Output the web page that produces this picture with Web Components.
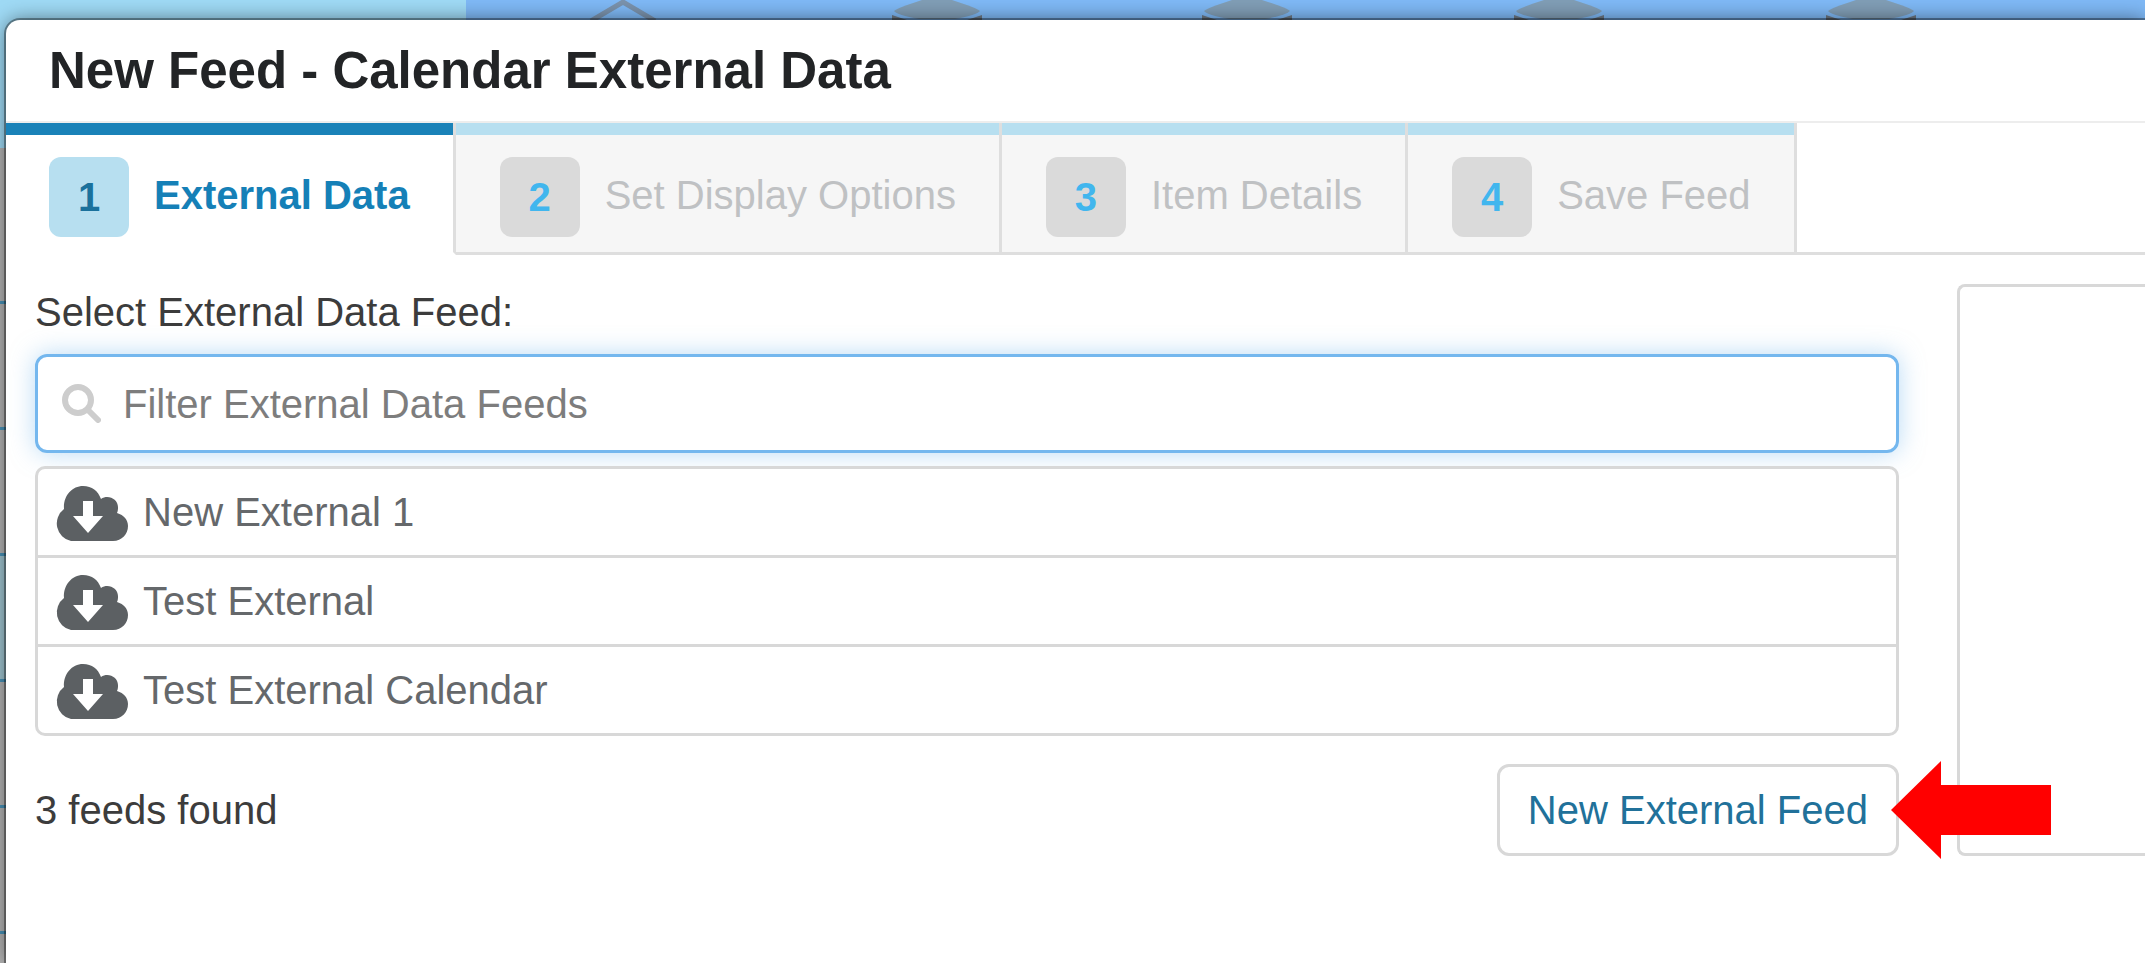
<!DOCTYPE html>
<html lang="en">
<head>
<meta charset="utf-8">
<title>New Feed - Calendar External Data</title>
<style>
html, body {
	height: 100%;
	margin: 0;
}

body {
	font-family: "Liberation Sans", Arial, sans-serif;
	font-size: 40px;
	line-height: 48px;
	color: #3c3c3c;
	overflow: hidden;
}
</style>
</head>
<body>

<feed-page>
	<page-backdrop slot="backdrop"></page-backdrop>
	<feed-dialog>
		<span slot="title">New Feed - Calendar External Data</span>
		<wizard-step slot="steps" number="1" selected>External Data</wizard-step>
		<wizard-step slot="steps" number="2">Set Display Options</wizard-step>
		<wizard-step slot="steps" number="3">Item Details</wizard-step>
		<wizard-step slot="steps" number="4">Save Feed</wizard-step>
		<feed-picker>
			<feed-item>New External 1</feed-item>
			<feed-item>Test External</feed-item>
			<feed-item>Test External Calendar</feed-item>
			<span slot="count">3 feeds found</span>
			<feed-button slot="action">New External Feed</feed-button>
		</feed-picker>
		<preview-panel slot="preview"></preview-panel>
	</feed-dialog>
</feed-page>

<script>
(function() {

function define(name, html) {
	const template = document.createElement('template');
	template.innerHTML = html;

	window.customElements.define(name, class extends HTMLElement {
		constructor() {
			super();
			this.attachShadow({mode: 'open'});
			this.shadowRoot.appendChild(template.content.cloneNode(true));
		}

		connectedCallback() {
			// the step number is passed as an attribute
			var badge = this.shadowRoot.querySelector('.number');
			if(badge) {
				badge.textContent = this.getAttribute('number');
			}
		}
	});
}

// backdrop and dialog share one grid cell, the dialog lies on top
define('feed-page', `
    <style>
:host {
	display: grid;
	grid-template: minmax(0, 1fr) / minmax(0, 1fr);
	height: 100%;
}

::slotted(*) {
	grid-area: 1 / 1;
}
</style>

<slot name="backdrop"></slot>
<slot></slot>`);

define('page-backdrop', `
    <style>
:host {
	display: flex;
	flex-direction: column;
	overflow: hidden;
	background: #b4b4b4;
}

.banner {
	display: flex;
	flex: none;
	height: 148px;
	background: #9fdaf5;
}

.brand {
	flex: none;
	width: 466px;
}

.menu {
	flex: 1;
	background: #7fb9f6;
}

svg {
	display: block;
}

.line {
	flex: none;
	height: 123px;
	border-bottom: 3px solid #4a93b8;
}

.first {
	height: 153px;
}

.tinted {
	background: #9fc4d0;
}
</style>

<div class="banner">
	<div class="brand"></div>
	<div class="menu">
		<svg width="1679" height="20" viewBox="466 0 1679 20" aria-hidden="true">
			<defs>
				<g id="hat">
					<path d="M-43 11Q-40 8-15 0H15Q40 8 43 11Q40 15 18 19H-18Q-40 15-43 11Z" fill="#819eb6"/>
					<path d="M-45 15L-30 20H-45ZM45 15L30 20H45Z" fill="#6c7884"/>
				</g>
			</defs>
			<path d="M591 21L623 2L655 21" fill="none" stroke="#7b93ad" stroke-width="5"/>
			<use href="#hat" x="937"/>
			<use href="#hat" x="1247"/>
			<use href="#hat" x="1559"/>
			<use href="#hat" x="1871"/>
		</svg>
	</div>
</div>
<div class="line first"></div>
<div class="line"></div>
<div class="line"></div>
<div class="line tinted"></div>
<div class="line"></div>
<div class="line"></div>`);

define('feed-dialog', `
    <style>
:host {
	display: flex;
	flex-direction: column;
	margin: 20px 0 0 6px;
	border-radius: 14px 0 0 0;
	background: #fff;
	box-shadow: 0 0 0 2px rgba(0, 0, 0, .35), 0 0 20px rgba(0, 0, 0, .5);
}

h1 {
	margin: 0;
	padding: 20px 43px;
	border-bottom: 2px solid #ededed;
	font-size: 51px;
	line-height: 61px;
	color: #222426;
}

nav {
	display: flex;
}

.rest {
	flex: 1;
	border-bottom: 3px solid #dedede;
}

.content {
	display: grid;
	grid-template-columns: minmax(0, 1fr) 188px;
	gap: 58px;
	padding: 29px 0 0 29px;
}
</style>

<h1><slot name="title"></slot></h1>
<nav><slot name="steps"></slot><div class="rest"></div></nav>
<div class="content">
	<slot></slot>
	<slot name="preview"></slot>
</div>`);

define('wizard-step', `
    <style>
:host {
	display: block;
}

button {
	display: flex;
	align-items: center;
	gap: 25px;
	box-sizing: border-box;
	height: 132px;
	margin: 0;
	padding: 18px 43px 0 44px;
	border: solid #dedede;
	border-width: 0 3px 3px 0;
	background: linear-gradient(#b7dff0 12px, #f6f6f6 12px);
	font: inherit;
	color: #bfc1c3;
	white-space: nowrap;
}

.number {
	width: 80px;
	border-radius: 12px;
	background: #dadada;
	font-weight: bold;
	line-height: 80px;
	color: #41b6ee;
}

.label {
	padding-bottom: 3px;
}

:host([selected]) button {
	padding-left: 43px;
	border-bottom-color: #fff;
	background: linear-gradient(#1a82b8 12px, #fff 12px);
	font-weight: bold;
	color: #1580b7;
}

:host([selected]) .number {
	background: #b7dff0;
	color: #1a719c;
}
</style>

<button type="button"><span class="number"></span><span class="label"><slot></slot></span></button>`);

define('feed-picker', `
    <style>
:host {
	display: block;
}

label {
	display: block;
	padding: 4px 0 18px;
}

.filter {
	display: flex;
	align-items: center;
	gap: 22px;
	box-sizing: border-box;
	height: 99px;
	padding: 0 24px;
	border: 3px solid #74b7ee;
	border-radius: 12px;
	box-shadow: 0 0 24px rgba(116, 183, 238, .5);
}

.filter svg {
	flex: none;
}

input {
	flex: 1;
	min-width: 0;
	padding: 0;
	border: 0;
	outline: none;
	background: none;
	font: inherit;
	color: inherit;
}

input::placeholder {
	color: #7d7d7d;
	opacity: 1;
}

ul {
	margin: 13px 0 28px;
	padding: 0;
	border: 3px solid #d8d8d8;
	border-radius: 10px;
	background: #fff;
	list-style: none;
}

.footer {
	display: flex;
	align-items: center;
	justify-content: space-between;
}
</style>

<label for="filter">Select External Data Feed:</label>
<div class="filter">
	<svg width="39" height="39" viewBox="0 0 39 39" aria-hidden="true">
		<circle cx="16" cy="16" r="13" fill="none" stroke="#cdcdcd" stroke-width="6"/>
		<path d="M26 26L36 36" stroke="#cdcdcd" stroke-width="6" stroke-linecap="round"/>
	</svg>
	<input id="filter" type="text" placeholder="Filter External Data Feeds">
</div>
<ul><slot></slot></ul>
<div class="footer">
	<slot name="count"></slot>
	<slot name="action"></slot>
</div>`);

define('feed-item', `
    <style>
:host {
	display: flex;
	align-items: center;
	gap: 15px;
	height: 86px;
	padding-left: 15px;
	color: #65686b;
}

:host(:not(:last-of-type)) {
	border-bottom: 3px solid #d8d8d8;
}

svg {
	flex: none;
}
</style>

<svg width="75" height="58" viewBox="0 -3 75 58" aria-hidden="true">
	<path d="M18 55A18 18 0 0 1 11 23C10 10 19 0 30 0C39 0 45 5 48 13C55 8 65 13 65 21C65 23 65 25 64 27C71 29 75 34 75 40C75 48 69 55 60 55Z" fill="#5c6063"/>
	<path d="M30 15H40V30H50L35 47L20 30H30Z" fill="#fff"/>
</svg>
<span><slot></slot></span>`);

define('feed-button', `
    <style>
:host {
	display: block;
	position: relative;
}

button {
	height: 92px;
	margin: 0;
	padding: 0 28px;
	border: 3px solid #d8d8d8;
	border-radius: 12px;
	background: #fff;
	font: inherit;
	color: #21719a;
}

/* pointer, lies over the button edge and the preview */
svg {
	position: absolute;
	top: -3px;
	left: calc(100% - 8px);
	z-index: 1;
}
</style>

<button type="button"><slot></slot></button>
<svg width="160" height="98" viewBox="0 0 160 98" aria-hidden="true">
	<path d="M0 49L50 0V24H160V74H50V98Z" fill="#f00"/>
</svg>`);

define('preview-panel', `
    <style>
:host {
	display: block;
	border: 3px solid #d8d8d8;
	border-right: 0;
	border-radius: 8px 0 0 8px;
}
</style>`);

})();
</script>
</body>
</html>
